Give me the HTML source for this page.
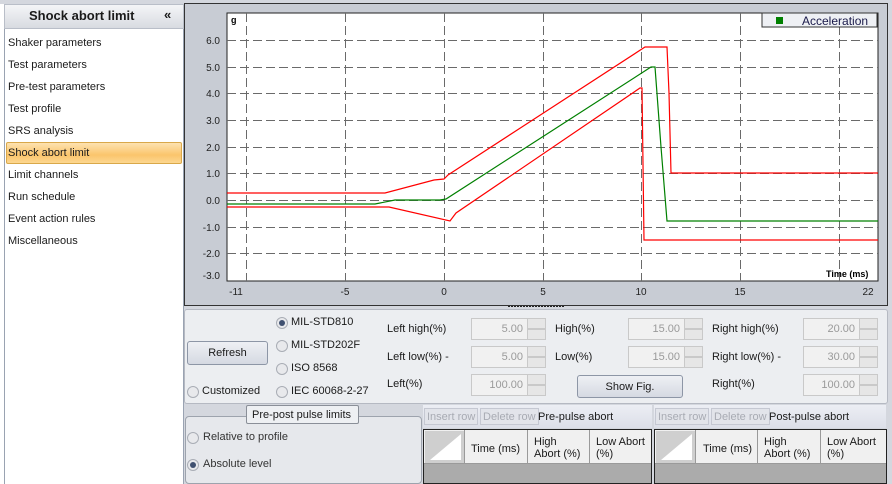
<!DOCTYPE html>
<html><head><meta charset="utf-8"><style>
*{box-sizing:border-box;margin:0;padding:0}
body{width:892px;height:484px;overflow:hidden;background:#d4d7de;font-family:"Liberation Sans",sans-serif;font-size:11px;color:#1a1a1a;position:relative}
.a{position:absolute;white-space:nowrap}
.nav div{position:absolute;left:8px;font-size:11px}
.inp{position:absolute;height:22px;border:1px solid #c9c9c9;background:#f1f1f1;color:#9a9a9a;text-align:right;padding:4px 22px 0 0;font-size:11px}
.inp:after{content:"";position:absolute;right:0;top:0;width:17px;height:20px;border-left:1px solid #c9c9c9;background:linear-gradient(#e6e6e6 0,#e6e6e6 45%,#c9c9c9 45%,#c9c9c9 55%,#e6e6e6 55%)}
.btn{position:absolute;border:1px solid #8d96a6;border-radius:3px;background:linear-gradient(#eef0f4,#d5d9e2);text-align:center;font-size:11px}
.rad{position:absolute;width:12px;height:12px;border-radius:50%;border:1px solid #a9adb5;background:#e8e9ec}
.rad.on:after{content:"";position:absolute;left:2px;top:2px;width:6px;height:6px;border-radius:50%;background:#3f5070}
.gb{position:absolute;height:17px;border:1px solid #c5c8d2;background:#e2e4ea;color:#a8abb3;font-size:11px;padding:2px 2px 0}
.th{position:absolute;border-right:1px solid #9a9a9a;font-size:11px;line-height:12px}
</style></head><body>
<div class="a" style="left:0;top:0;width:184px;height:484px;background:#fff;border-right:1px solid #9aa3b2"></div>
<div class="a" style="left:0;top:0;width:184px;height:4px;background:#d4d7de"></div>
<div class="a" style="left:4px;top:4px;width:180px;height:25px;background:linear-gradient(#f4f5f7,#d8dbe1);border:1px solid #b9bec8"></div>
<div class="a" style="left:29px;top:8px;font-size:13px;font-weight:bold">Shock abort limit</div>
<div class="a" style="left:164px;top:7px;font-size:13px;font-weight:bold">«</div>
<div class="a" style="left:4px;top:29px;width:1px;height:455px;background:#9aa3b2"></div>
<div class="a" style="left:6px;top:142px;width:176px;height:22px;border:1px solid #d9a84a;border-radius:2px;background:linear-gradient(#fde2b0,#fbc56c 60%,#fcd790)"></div>
<div class="nav">
<div style="top:37px">Shaker parameters</div>
<div style="top:59px">Test parameters</div>
<div style="top:81px">Pre-test parameters</div>
<div style="top:103px">Test profile</div>
<div style="top:125px">SRS analysis</div>
<div style="top:147px">Shock abort limit</div>
<div style="top:169px">Limit channels</div>
<div style="top:191px">Run schedule</div>
<div style="top:213px">Event action rules</div>
<div style="top:235px">Miscellaneous</div>
</div>
<div class="a" style="left:184px;top:3px;width:704px;height:303px;background:#c8ccd4;border:1px solid #333"></div>
<svg class="a" style="left:0;top:0" width="892" height="310">
<rect x="227" y="13" width="651" height="268" fill="#fff" stroke="#222"/>
<g stroke="#6a6a6a" stroke-dasharray="9,4" stroke-width="1">
<line x1="227" x2="878" y1="40.5" y2="40.5"/><line x1="227" x2="878" y1="67.5" y2="67.5"/><line x1="227" x2="878" y1="93.5" y2="93.5"/><line x1="227" x2="878" y1="120.5" y2="120.5"/><line x1="227" x2="878" y1="147.5" y2="147.5"/><line x1="227" x2="878" y1="173.5" y2="173.5"/><line x1="227" x2="878" y1="200.5" y2="200.5"/><line x1="227" x2="878" y1="227.5" y2="227.5"/><line x1="227" x2="878" y1="253.5" y2="253.5"/>
<line y1="13" y2="281" x1="246.5" x2="246.5"/><line y1="13" y2="281" x1="345.5" x2="345.5"/><line y1="13" y2="281" x1="444.5" x2="444.5"/><line y1="13" y2="281" x1="543.5" x2="543.5"/><line y1="13" y2="281" x1="641.5" x2="641.5"/><line y1="13" y2="281" x1="740.5" x2="740.5"/><line y1="13" y2="281" x1="839.5" x2="839.5"/>
</g>
<g fill="none" stroke-width="1.2">
<polyline stroke="#008000" points="227,204 375,204 395,200 440,200 446,199 651,67 655,67 661,147 667,221 878,221"/>
<polyline stroke="#f00" points="227,193 385,193 434,180 444,179 448,175 645,47 667,47 669,93 671,173 878,173"/>
<polyline stroke="#f00" points="227,207 389,207 450,221 456,213 640,88 642,88 644,240 878,240"/>
</g>
<rect x="762" y="13" width="115" height="14" fill="#eef0f4" stroke="#333"/>
<rect x="776" y="17" width="7" height="7" fill="#008000"/>
<text x="802" y="25" font-family="Liberation Sans" font-size="12" fill="#1a1a4a">Acceleration</text>
<g font-family="Liberation Sans" font-size="10" fill="#222" text-anchor="end">
<text x="220" y="44">6.0</text><text x="220" y="71">5.0</text><text x="220" y="97">4.0</text><text x="220" y="124">3.0</text><text x="220" y="151">2.0</text><text x="220" y="177">1.0</text><text x="220" y="204">0.0</text><text x="220" y="231">-1.0</text><text x="220" y="257">-2.0</text><text x="220" y="279">-3.0</text>
</g>
<g font-family="Liberation Sans" font-size="10" fill="#222" text-anchor="middle">
<text x="236" y="295">-11</text><text x="345" y="295">-5</text><text x="444" y="295">0</text><text x="543" y="295">5</text><text x="641" y="295">10</text><text x="740" y="295">15</text><text x="868" y="295">22</text>
</g>
<text x="231" y="23" font-family="Liberation Sans" font-size="9" font-weight="bold">g</text>
<text x="826" y="277" font-family="Liberation Sans" font-size="9" font-weight="bold">Time (ms)</text>
<g stroke="#222"><line x1="508" x2="565" y1="306.5" y2="306.5" stroke-dasharray="2,1"/></g>
</svg>
<div class="a" style="left:184px;top:309px;width:704px;height:95px;background:#eceef1;border:1px solid #b5b9c2;border-radius:3px"></div>
<div class="btn" style="left:187px;top:341px;width:81px;height:24px;padding-top:5px">Refresh</div>
<div class="rad on" style="left:276px;top:317px"></div><div class="a" style="left:291px;top:316px">MIL-STD810</div>
<div class="rad" style="left:276px;top:340px"></div><div class="a" style="left:291px;top:339px">MIL-STD202F</div>
<div class="rad" style="left:276px;top:363px"></div><div class="a" style="left:291px;top:362px">ISO 8568</div>
<div class="rad" style="left:276px;top:386px"></div><div class="a" style="left:291px;top:385px">IEC 60068-2-27</div>
<div class="rad" style="left:187px;top:386px"></div><div class="a" style="left:202px;top:385px">Customized</div>
<div class="a" style="left:387px;top:323px">Left high(%)</div>
<div class="a" style="left:387px;top:351px">Left low(%) -</div>
<div class="a" style="left:387px;top:378px">Left(%)</div>
<div class="inp" style="left:471px;top:318px;width:75px">5.00</div>
<div class="inp" style="left:471px;top:346px;width:75px">5.00</div>
<div class="inp" style="left:471px;top:374px;width:75px">100.00</div>
<div class="a" style="left:555px;top:323px">High(%)</div>
<div class="a" style="left:555px;top:351px">Low(%)</div>
<div class="inp" style="left:628px;top:318px;width:75px">15.00</div>
<div class="inp" style="left:628px;top:346px;width:75px">15.00</div>
<div class="btn" style="left:577px;top:375px;width:106px;height:23px;padding-top:5px">Show Fig.</div>
<div class="a" style="left:712px;top:323px">Right high(%)</div>
<div class="a" style="left:712px;top:351px">Right low(%) -</div>
<div class="a" style="left:712px;top:378px">Right(%)</div>
<div class="inp" style="left:803px;top:318px;width:75px">20.00</div>
<div class="inp" style="left:803px;top:346px;width:75px">30.00</div>
<div class="inp" style="left:803px;top:374px;width:75px">100.00</div>
<div class="a" style="left:184px;top:404px;width:708px;height:80px;background:#d4d7de"></div>
<div class="a" style="left:185px;top:416px;width:237px;height:68px;border:1px solid #9da3ad;border-radius:4px;background:#e6e8ec"></div>
<div class="a" style="left:246px;top:405px;width:113px;height:19px;border:1px solid #8a8f98;border-radius:2px;background:#eef0f3;padding:3px 0 0 5px">Pre-post pulse limits</div>
<div class="rad" style="left:187px;top:432px"></div><div class="a" style="left:203px;top:431px;color:#333">Relative to profile</div>
<div class="rad on" style="left:187px;top:459px"></div><div class="a" style="left:203px;top:458px;color:#333">Absolute level</div>
<div class="a" style="left:423px;top:405px;width:229px;height:23px;background:linear-gradient(#eceef4,#dcdfe8)"></div>
<div class="gb" style="left:424px;top:408px">Insert row</div>
<div class="gb" style="left:480px;top:408px">Delete row</div>
<div class="a" style="left:538px;top:411px">Pre-pulse abort</div>
<div class="a" style="left:654px;top:405px;width:232px;height:23px;background:linear-gradient(#eceef4,#dcdfe8)"></div>
<div class="gb" style="left:655px;top:408px">Insert row</div>
<div class="gb" style="left:711px;top:408px">Delete row</div>
<div class="a" style="left:769px;top:411px">Post-pulse abort</div>
<div class="a" style="left:423px;top:429px;width:229px;height:55px;background:#ababab;border:1px solid #222"></div>
<div class="a" style="left:424px;top:430px;width:227px;height:34px;background:#f0f0f0;border-bottom:1px solid #9a9a9a"></div>
<svg class="a" style="left:425px;top:431px" width="40" height="32"><rect width="39" height="32" fill="#cfcfcf"/><polygon points="5,29 36,29 36,3" fill="#fff"/></svg>
<div class="th" style="left:464px;top:430px;width:64px;height:34px;border-left:1px solid #9a9a9a;padding:13px 0 0 6px">Time (ms)</div>
<div class="th" style="left:528px;top:430px;width:62px;height:34px;padding:6px 0 0 6px">High<br>Abort (%)</div>
<div class="th" style="left:590px;top:430px;width:61px;height:34px;padding:6px 0 0 6px;border-right:0">Low Abort<br>(%)</div>
<div class="a" style="left:654px;top:429px;width:233px;height:55px;background:#ababab;border:1px solid #222"></div>
<div class="a" style="left:655px;top:430px;width:231px;height:34px;background:#f0f0f0;border-bottom:1px solid #9a9a9a"></div>
<svg class="a" style="left:656px;top:431px" width="40" height="32"><rect width="39" height="32" fill="#cfcfcf"/><polygon points="5,29 36,29 36,3" fill="#fff"/></svg>
<div class="th" style="left:695px;top:430px;width:63px;height:34px;border-left:1px solid #9a9a9a;padding:13px 0 0 7px">Time (ms)</div>
<div class="th" style="left:758px;top:430px;width:63px;height:34px;padding:6px 0 0 6px">High<br>Abort (%)</div>
<div class="th" style="left:821px;top:430px;width:65px;height:34px;padding:6px 0 0 6px;border-right:0">Low Abort<br>(%)</div>
</body></html>
